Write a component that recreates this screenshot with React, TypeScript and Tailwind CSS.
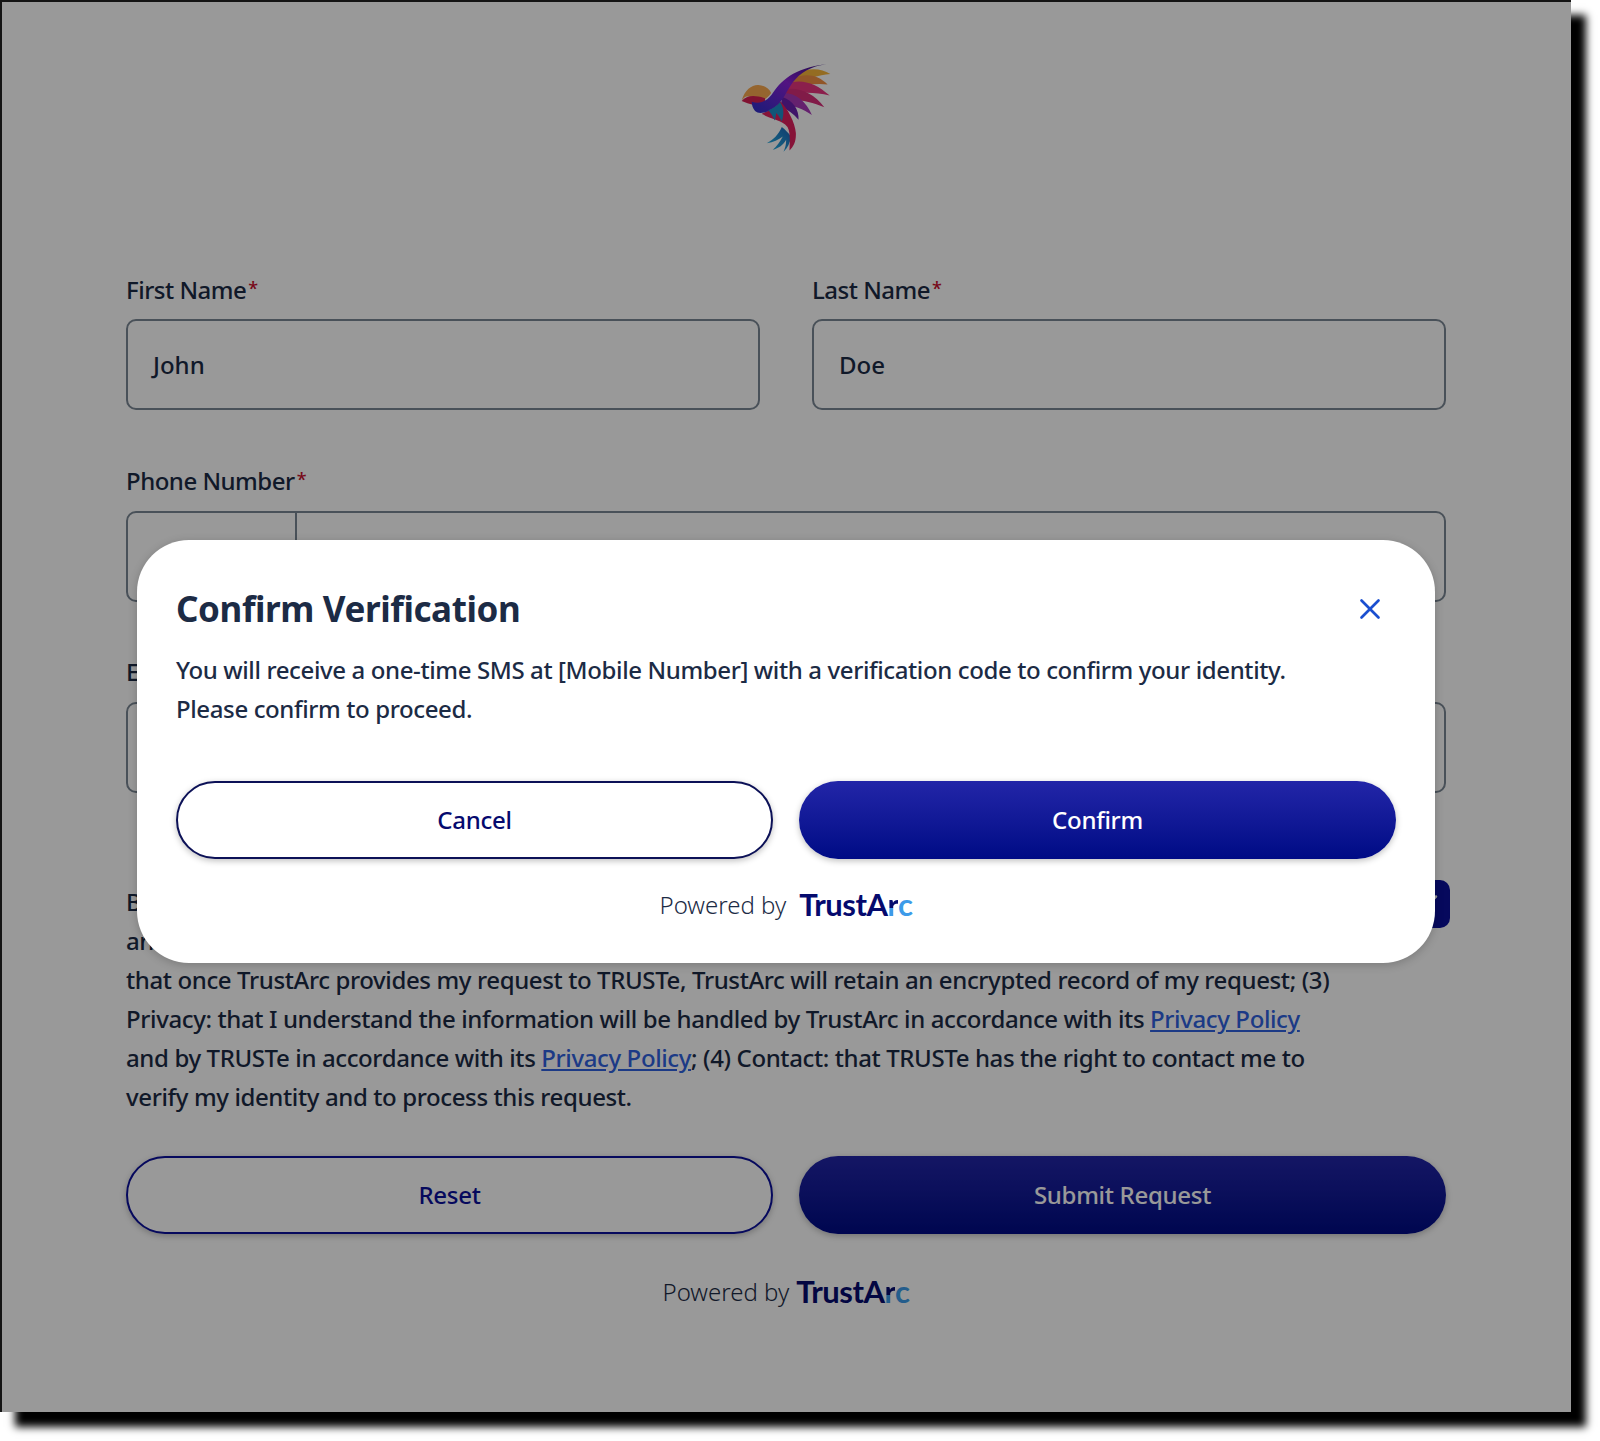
import { X, Check } from "lucide-react";

const font = { label: "text-[24px] leading-[39px] font-medium tracking-[-0.5px] text-[#1c2b45]" };

const Bird = () => (
  <svg viewBox="120 70 275 270" className="h-[92px] w-[92px]">
    <defs>
      <linearGradient id="wing" x1="0" y1="1" x2="1" y2="0">
        <stop offset="0" stopColor="#2b2fc8" />
        <stop offset="0.55" stopColor="#8a20d8" />
        <stop offset="1" stopColor="#301078" />
      </linearGradient>
      <linearGradient id="tail" x1="1" y1="0" x2="0" y2="1">
        <stop offset="0" stopColor="#1d62b8" />
        <stop offset="1" stopColor="#20b8e4" />
      </linearGradient>
    </defs>
    {/* wing feathers, back to front */}
    <path d="M285 105 C320 84 360 84 390 103 C355 106 320 118 285 135 Z" fill="#f7b53a" />
    <path d="M275 120 C310 100 350 102 382 135 C350 130 310 136 270 150 Z" fill="#f28f44" />
    <path d="M258 135 C295 115 345 128 388 168 C345 158 300 156 254 168 Z" fill="#e8357f" />
    <path d="M252 150 C290 140 340 158 372 203 C335 186 295 178 248 182 Z" fill="#d82d78" />
    <path d="M248 160 C285 158 318 185 335 226 C310 208 280 198 244 190 Z" fill="#a838b8" />
    <path d="M246 172 C278 182 297 210 295 240 C280 222 262 210 242 200 Z" fill="#6a20b0" />
    {/* tail and belly */}
    <path d="M245 262 C235 285 220 300 200 310 C220 308 235 300 248 290 C240 305 230 320 218 330 C235 326 250 315 258 300 C258 315 255 325 250 336 C262 325 270 310 272 290 C265 280 255 270 245 262 Z" fill="url(#tail)" />
    <path d="M185 222 C215 242 245 240 262 262 C272 280 268 310 268 332 C280 320 288 305 287 280 C285 250 262 205 240 185 C225 205 205 215 185 222 Z" fill="#e0205e" />
    {/* head */}
    <path d="M125 182 C135 150 155 135 175 136 C195 138 208 148 213 160 C205 172 195 180 185 182 C170 176 150 168 135 172 Z" fill="#f9a84f" />
    <path d="M125 184 C140 166 165 166 195 176 L195 200 C170 200 150 194 125 184 Z" fill="#d81f52" />
    {/* body sweeping into the wing */}
    <path d="M155 186 C180 195 200 185 215 165 C240 125 280 85 378 74 C330 80 300 100 278 128 C262 150 255 170 238 190 C215 215 180 228 165 214 C158 205 155 195 155 186 Z" fill="url(#wing)" />
    <path d="M205 212 C215 208 230 200 240 188 C252 205 252 225 245 245 C238 232 234 226 228 220 C228 226 226 235 224 242 C218 230 212 220 205 212 Z" fill="#1d8fc8" />
  </svg>
);

const Powered = ({ gap }: { gap: string }) => (
  <div className={`flex items-center justify-center ${gap}`}>
    <span className="text-[24px] leading-[39px] font-light text-[#1c2b45]">Powered by</span>
    <span className="font-['Lato',sans-serif] text-[31px] leading-[39px] font-bold tracking-[-0.5px] text-[#050a6e]">
      TrustA
      <span className="bg-gradient-to-b from-[#050a6e] from-60% to-[#3d9be9] to-60% bg-clip-text text-transparent">r</span>
      <span className="text-[#3d9be9]">c</span>
    </span>
  </div>
);

const Star = () => <span className="ml-[2px] align-[4px] text-[18px] leading-none text-[#c8102e]">*</span>;

const Field = ({ label, value }: { label: string; value: string }) => (
  <div className="flex-1">
    <label className={`block ${font.label}`}>
      {label}
      <Star />
    </label>
    <div className="mt-[10px] flex h-[91px] items-center rounded-[10px] border-2 border-[#7b8794] px-[25px] text-[24px] font-medium text-[#1c2b45]">
      {value}
    </div>
  </div>
);

export default function App() {
  return (
    <div className="relative h-[1441px] w-[1600px] overflow-hidden bg-white font-['Noto_Sans',sans-serif]">
      {/* page frame, the dim layer sits on top of the form */}
      <div className="relative h-[1412px] w-[1571px] bg-white shadow-[15px_15px_8px_0_#000,inset_2px_2px_0_#222]">
        <div className="flex flex-col pt-[62px] pr-[125px] pl-[126px]">
          <div className="flex justify-center">
            <Bird />
          </div>
          <div className="mt-[116px] flex gap-[52px]">
            <Field label="First Name" value="John" />
            <Field label="Last Name" value="Doe" />
          </div>
          <div className="mt-[51px]">
            <label className={`block ${font.label}`}>
              Phone Number
              <Star />
            </label>
            <div className="mt-[11px] flex h-[91px] rounded-[10px] border-2 border-[#7b8794]">
              <div className="w-[169px] border-r-2 border-[#7b8794]" />
            </div>
          </div>
          <div className="mt-[50px]">
            <label className={`block ${font.label}`}>
              Email
              <Star />
            </label>
            <div className="mt-[11px] h-[91px] rounded-[10px] border-2 border-[#7b8794]" />
          </div>
          <div className="relative mt-[89px]">
            <p className="text-[24px] leading-[39px] font-medium tracking-[-0.38px] text-[#1c2b45]">
              By submitting this request, I confirm the following: (1) Accuracy: the details are correct
              <br />
              and complete; (2) Retention: that TrustArc will process this request on my behalf and
              <br />
              that once TrustArc provides my request to TRUSTe, TrustArc will retain an encrypted record of my request; (3)
              <br />
              Privacy: that I understand the information will be handled by TrustArc in accordance with its{" "}
              <a className="text-[#2f62e0] underline">Privacy Policy</a>
              <br />
              and by TRUSTe in accordance with its <a className="text-[#2f62e0] underline">Privacy Policy</a>; (4)
              Contact: that TRUSTe has the right to contact me to
              <br />
              verify my identity and to process this request.
            </p>
            <div className="absolute top-[-2px] right-[-4px] flex h-[48px] w-[48px] items-center justify-center rounded-[10px] bg-[#0a0f9c] text-white">
              <Check size={30} />
            </div>
          </div>
          <div className="mt-[40px] grid grid-cols-2 gap-[26px]">
            <button className="h-[78px] rounded-full border-2 border-[#0a0f9c] bg-white text-[24px] font-medium tracking-[-0.3px] text-[#0a0f9c] shadow-[0_2px_6px_rgba(0,0,0,0.25)]">
              Reset
            </button>
            <button className="h-[78px] rounded-full bg-gradient-to-b from-[#2225a8] to-[#000a85] text-[24px] font-medium tracking-[-0.3px] text-white shadow-[0_2px_6px_rgba(0,0,0,0.25)]">
              Submit Request
            </button>
          </div>
          <div className="mt-[38px]">
            <Powered gap="gap-[7px]" />
          </div>
        </div>

        {/* dim overlay */}
        <div className="absolute inset-0 bg-black/40" />

        {/* modal */}
        <div className="absolute top-[540px] left-[137px] w-[1298px] rounded-[52px] bg-white px-[39px] pt-[46px] pb-[39px] shadow-[0_2px_10px_rgba(0,0,0,0.2)]">
          <div className="flex items-center justify-between">
            <h2 className="text-[35px] leading-[46px] font-bold tracking-[-0.4px] text-[#1c2b45]">Confirm Verification</h2>
            <X size={34} strokeWidth={1.9} className="mr-[9px] text-[#1a4fd0]" />
          </div>
          <p className="mt-[18px] text-[24px] leading-[39px] font-medium tracking-[-0.38px] text-[#1c2b45]">
            You will receive a one-time SMS at [Mobile Number] with a verification code to confirm your identity.
            <br />
            Please confirm to proceed.
          </p>
          <div className="mt-[53px] grid grid-cols-2 gap-[26px]">
            <button className="h-[78px] rounded-full border-2 border-[#0c1157] bg-white text-[24px] font-medium tracking-[-0.3px] text-[#050a6e] shadow-[0_2px_6px_rgba(0,0,0,0.25)]">
              Cancel
            </button>
            <button className="h-[78px] rounded-full bg-gradient-to-b from-[#2225a8] to-[#000a85] text-[24px] font-medium tracking-[-0.3px] text-white shadow-[0_2px_6px_rgba(0,0,0,0.25)]">
              Confirm
            </button>
          </div>
          <div className="mt-[26px]">
            <Powered gap="gap-[13px]" />
          </div>
        </div>
      </div>
    </div>
  );
}
